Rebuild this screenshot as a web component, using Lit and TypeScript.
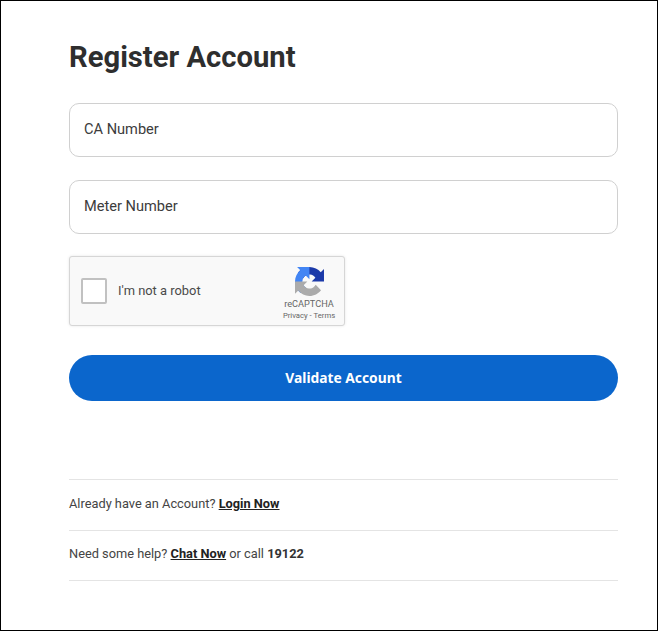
import { LitElement, html, css } from "lit";
import { customElement } from "lit/decorators.js";

@customElement("app-root")
export class AppRoot extends LitElement {
  static styles = css`
    :host { display: block; }
    .page {
      box-sizing: border-box; width: 658px; height: 631px; border: 1px solid #000;
      background: #fff; padding: 38px 39px 0 68px;
      font-family: Roboto, sans-serif; color: #333;
    }
    h1 { margin: 0 0 28px; font-size: 29.2px; line-height: 36px; font-weight: 700; color: #2e2e2e; }
    .field {
      box-sizing: border-box; height: 54px; border: 1px solid #d0d0d0; border-radius: 10px;
      padding: 0 14px 2px; display: flex; align-items: center; font-size: 14.6px; color: #3c3c3c;
      margin-bottom: 23px;
    }
    .field + .field { margin-bottom: 22px; }
    .captcha {
      box-sizing: border-box; width: 276px; height: 70px; background: #f9f9f9;
      border: 1px solid #d6d6d6; border-radius: 3px; box-shadow: 0 0 3px rgba(0,0,0,.1);
      display: flex; align-items: center; padding: 0 8px 0 11px; margin-bottom: 29px;
    }
    .box { box-sizing: border-box; width: 26px; height: 26px; background: #fff; border: 2px solid #c1c1c1; border-radius: 2px; }
    .robot { margin-left: 11px; flex: 1; font-size: 12.9px; color: #4a4a4a; padding-bottom: 1px; }
    .brand { width: 54px; display: flex; flex-direction: column; align-items: center; color: #666; padding-top: 6px; }
    .brand svg { display: block; margin-bottom: 2px; }
    .brand .name { font-size: 9.2px; line-height: 12px; }
    .brand .terms { font-size: 7.7px; line-height: 11px; white-space: nowrap; }
    .btn {
      box-sizing: border-box; height: 46px; border-radius: 23px; background: #0b66cc; color: #fff; display: flex;
      align-items: center; justify-content: center; font-size: 13.8px; font-weight: 700;
      margin-bottom: 78px; font-family: "Noto Sans", sans-serif; padding-bottom: 2px;
    }
    .row {
      box-sizing: border-box; height: 51px; border-top: 1px solid #e4e4e4; display: flex;
      align-items: center; font-size: 12.8px; color: #444; white-space: pre; padding-bottom: 3px;
    }
    .row:last-child { border-bottom: 1px solid #e4e4e4; height: 51px; padding-bottom: 4px; }
    a { color: #222; font-weight: 700; text-decoration: underline; }
    b { color: #333; font-weight: 700; }
  `;

  render() {
    return html`<div class="page">
      <h1>Register Account</h1>
      <div class="field">CA Number</div>
      <div class="field">Meter Number</div>
      <div class="captcha">
        <div class="box"></div>
        <div class="robot">I'm not a robot</div>
        <div class="brand">
          <svg width="29" height="29" viewBox="0 0 64 64">
            <path fill="#1c3aa9" d="M64 31.955l-.033-1.37V4.687l-7.16 7.16C50.948 4.674 42.033.093 32.05.093c-10.4 0-19.622 4.96-25.458 12.64l11.736 11.86a15.55 15.55 0 0 1 4.754-5.334c2.05-1.6 4.952-2.906 8.968-2.906.485 0 .86.057 1.135.163 4.976.393 9.288 3.14 11.827 7.124l-8.307 8.307c10.522-.04 22.4-.066 27.295.006" />
            <path fill="#4285f4" d="M31.862.001l-1.37.033H4.594l7.16 7.16C4.58 13.05 0 21.965 0 31.949c0 10.4 4.96 19.622 12.64 25.458l11.86-11.736a15.55 15.55 0 0 1-5.334-4.754c-1.6-2.05-2.906-4.952-2.906-8.968 0-.485.057-.86.163-1.135.393-4.976 3.14-9.288 7.124-11.827l8.307 8.307c-.04-10.522-.066-22.4.006-27.295" />
            <path fill="#ababab" d="M.001 31.95l.033 1.37v25.898l7.16-7.16c5.86 7.173 14.775 11.754 24.76 11.754 10.4 0 19.622-4.96 25.458-12.64l-11.736-11.86a15.55 15.55 0 0 1-4.754 5.334c-2.05 1.6-4.952 2.906-8.968 2.906-.485 0-.86-.057-1.135-.163-4.976-.393-9.288-3.14-11.827-7.124l8.307-8.307c-10.522.04-22.4.066-27.295-.006" />
          </svg>
          <div class="name">reCAPTCHA</div>
          <div class="terms">Privacy - Terms</div>
        </div>
      </div>
      <div class="btn">Validate Account</div>
      <div class="row">Already have an Account? <a>Login Now</a></div>
      <div class="row">Need some help? <a>Chat Now</a> or call <b>19122</b></div>
    </div>`;
  }
}
